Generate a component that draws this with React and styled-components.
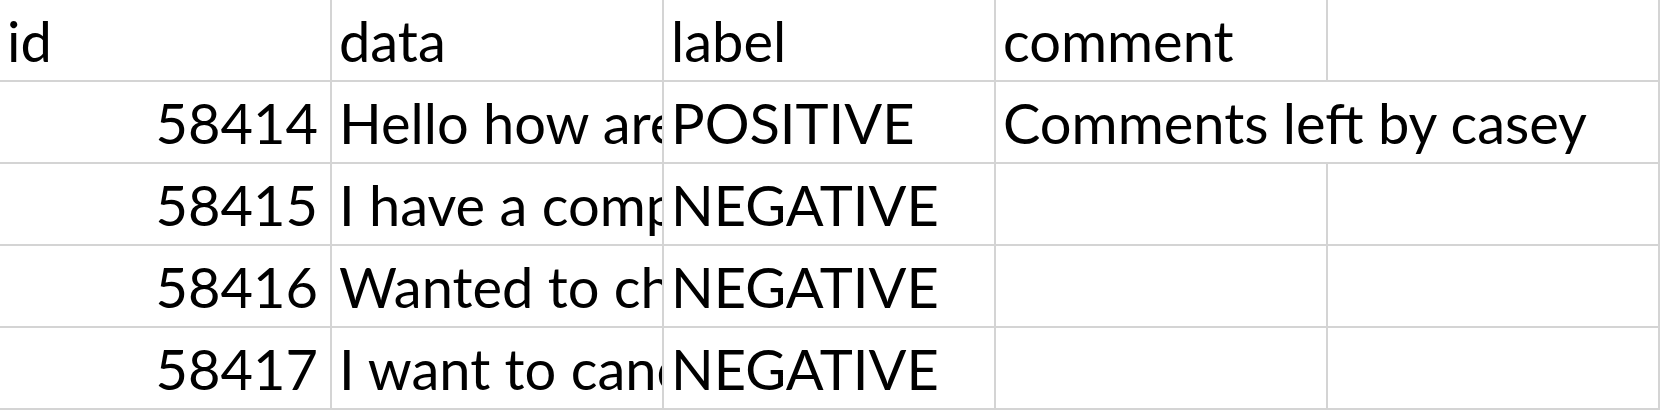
import React from "react";
import styled, { createGlobalStyle } from "styled-components";

const GlobalStyle = createGlobalStyle`
  html, body {
    margin: 0;
    padding: 0;
    background: #ffffff;
  }
`;

const Sheet = styled.div`
  display: grid;
  grid-template-columns: repeat(5, 332px);
  grid-auto-rows: 82px;
  width: 1660px;
  height: 410px;
  overflow: hidden;
  font-family: "Lato", "Liberation Sans", sans-serif;
  font-size: 56px;
  color: #000;
  background: #fff;
`;

const Cell = styled.div`
  box-sizing: border-box;
  border-right: 2px solid #d4d4d4;
  border-bottom: 2px solid #d4d4d4;
  padding: 13px ${(p) => (p.$numeric ? "12px" : "0")} 0
    ${(p) => (p.$numeric ? "0" : "7px")};
  line-height: 56px;
  white-space: nowrap;
  overflow: hidden;
  text-align: ${(p) => (p.$numeric ? "right" : "left")};
  grid-column: span ${(p) => p.$span || 1};
`;

const headers = ["id", "data", "label", "comment", ""];

const rows = [
  {
    id: 58414,
    data: "Hello how are you doing today",
    label: "POSITIVE",
    comment: "Comments left by casey",
  },
  {
    id: 58415,
    data: "I have a complaint about my order",
    label: "NEGATIVE",
    comment: "",
  },
  {
    id: 58416,
    data: "Wanted to check on my refund",
    label: "NEGATIVE",
    comment: "",
  },
  {
    id: 58417,
    data: "I want to cancel my subscription",
    label: "NEGATIVE",
    comment: "",
  },
];

export default function App() {
  return (
    <>
      <GlobalStyle />
      <Sheet>
        {headers.map((h, i) => (
          <Cell key={"h" + i}>{h}</Cell>
        ))}
        {rows.map((r) => (
          <React.Fragment key={r.id}>
            <Cell $numeric>{r.id}</Cell>
            <Cell>{r.data}</Cell>
            <Cell>{r.label}</Cell>
            {r.comment ? (
              <Cell $span={2}>{r.comment}</Cell>
            ) : (
              <>
                <Cell />
                <Cell />
              </>
            )}
          </React.Fragment>
        ))}
      </Sheet>
    </>
  );
}
